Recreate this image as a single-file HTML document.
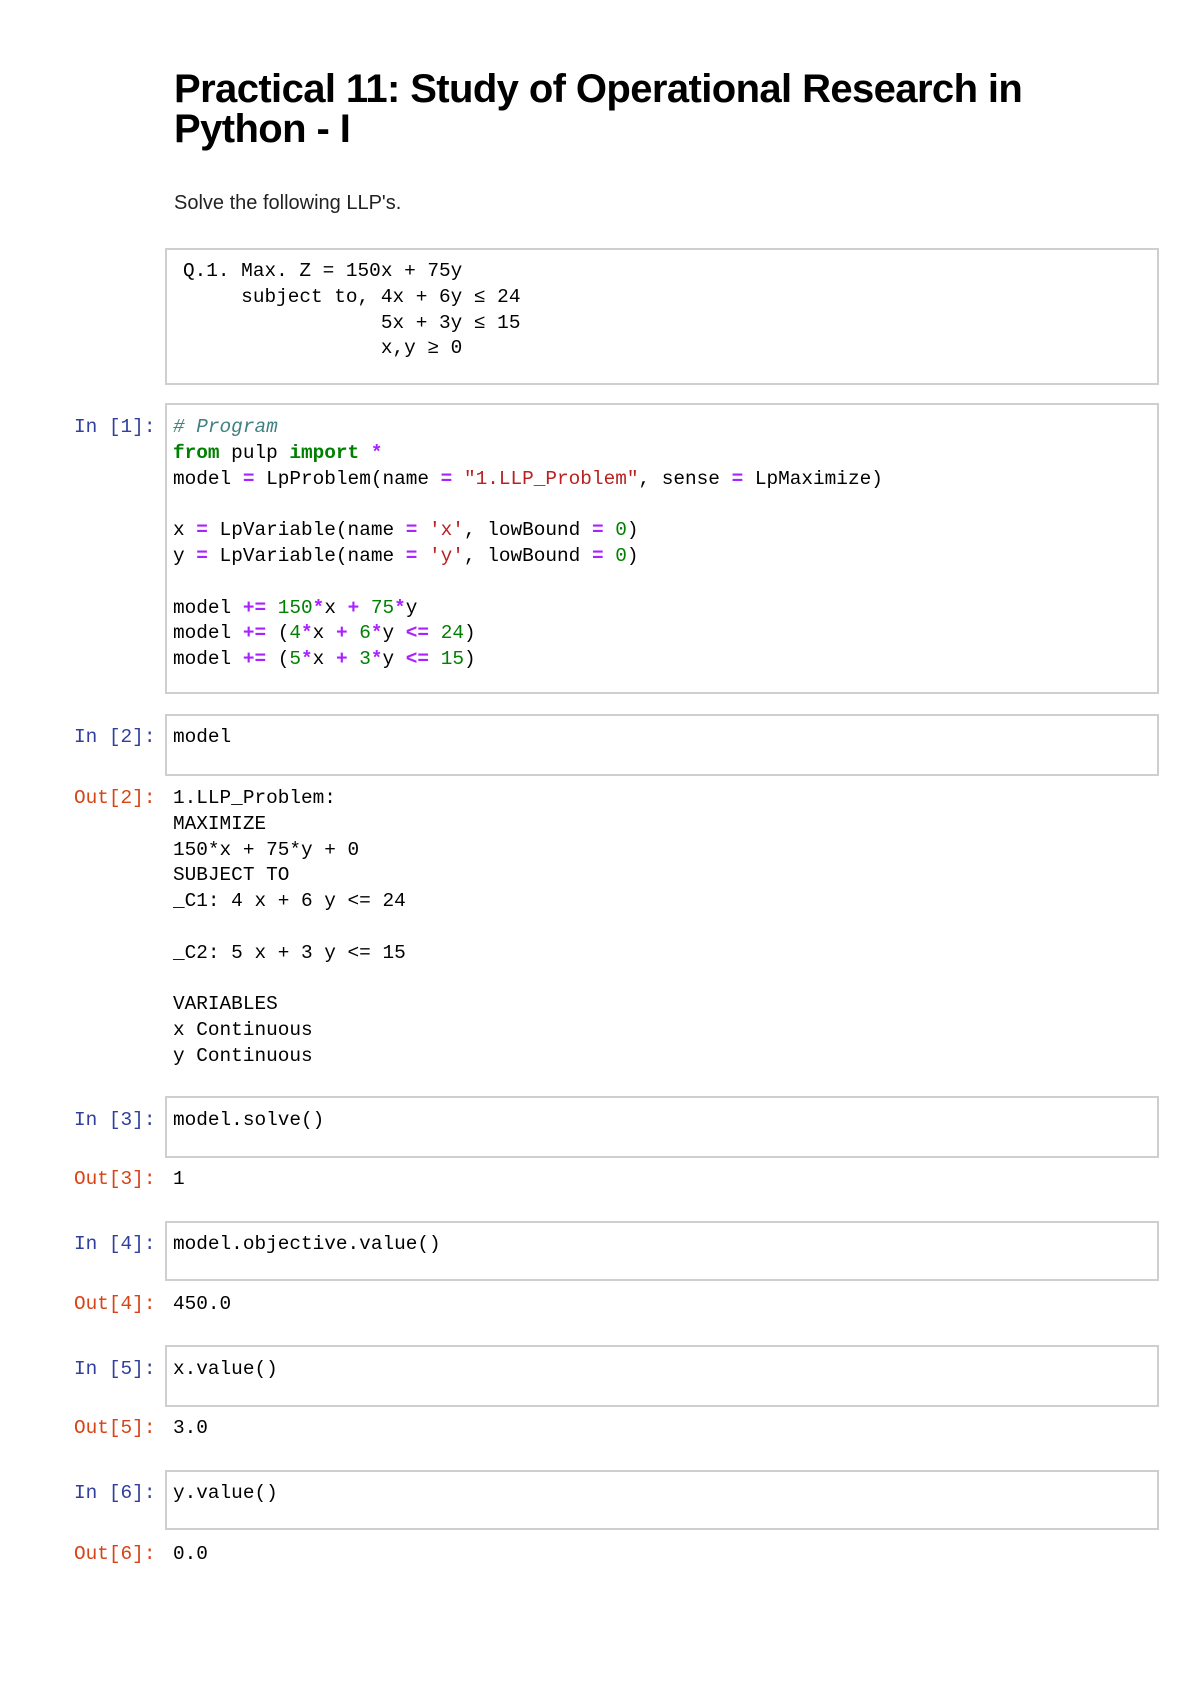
<!DOCTYPE html>
<html><head><meta charset="utf-8"><style>
html,body{margin:0;padding:0;background:#fff;width:1200px;height:1698px;overflow:hidden}
body{position:relative;font-family:"Liberation Mono","DejaVu Sans Mono",monospace}
.a{position:absolute;white-space:pre}
.h{font-family:"Liberation Sans",sans-serif;font-weight:bold;font-size:40px;color:#000;left:174px;letter-spacing:-0.6px}
.box{position:absolute;left:165px;width:994px;border:2px solid #cfcfcf;box-sizing:border-box;background:#fff}
.m{font-size:19.4px;line-height:25.8px;color:#000}
.in{color:#303F9F;font-size:19.4px;line-height:25.8px;left:74px}
.out{color:#D84315;font-size:19.4px;line-height:25.8px;left:74px}
.k{color:#008000;font-weight:bold}
.o{color:#AA22FF;font-weight:bold}
.n{color:#008000}
.s{color:#BA2121}
.c{color:#408080;font-style:italic}
</style></head><body>
<div class="a h" style="top:67px">Practical 11: Study of Operational Research in</div>
<div class="a h" style="top:107px">Python - I</div>
<div class="a" style="top:192px;left:174px;font-family:'Liberation Sans',sans-serif;font-size:20px;color:#222">Solve the following LLP's.</div>

<div class="box" style="top:248px;height:137px"></div>
<div class="a m" style="left:183px;top:259px">Q.1. Max. Z = 150x + 75y
     subject to, 4x + 6y ≤ 24
                 5x + 3y ≤ 15
                 x,y ≥ 0</div>

<div class="box" style="top:403px;height:291px"></div>
<div class="a in" style="top:415px">In [1]:</div>
<div class="a m" style="left:173px;top:415px"><span class="c"># Program</span>
<span class="k">from</span> pulp <span class="k">import</span> <span class="o">*</span>
model <span class="o">=</span> LpProblem(name <span class="o">=</span> <span class="s">"1.LLP_Problem"</span>, sense <span class="o">=</span> LpMaximize)

x <span class="o">=</span> LpVariable(name <span class="o">=</span> <span class="s">'x'</span>, lowBound <span class="o">=</span> <span class="n">0</span>)
y <span class="o">=</span> LpVariable(name <span class="o">=</span> <span class="s">'y'</span>, lowBound <span class="o">=</span> <span class="n">0</span>)

model <span class="o">+=</span> <span class="n">150</span><span class="o">*</span>x <span class="o">+</span> <span class="n">75</span><span class="o">*</span>y
model <span class="o">+=</span> (<span class="n">4</span><span class="o">*</span>x <span class="o">+</span> <span class="n">6</span><span class="o">*</span>y <span class="o">&lt;=</span> <span class="n">24</span>)
model <span class="o">+=</span> (<span class="n">5</span><span class="o">*</span>x <span class="o">+</span> <span class="n">3</span><span class="o">*</span>y <span class="o">&lt;=</span> <span class="n">15</span>)</div>

<div class="box" style="top:714px;height:62px"></div>
<div class="a in" style="top:725px">In [2]:</div>
<div class="a m" style="left:173px;top:725px">model</div>
<div class="a out" style="top:786px">Out[2]:</div>
<div class="a m" style="left:173px;top:786px">1.LLP_Problem:
MAXIMIZE
150*x + 75*y + 0
SUBJECT TO
_C1: 4 x + 6 y &lt;= 24

_C2: 5 x + 3 y &lt;= 15

VARIABLES
x Continuous
y Continuous</div>

<div class="box" style="top:1096px;height:62px"></div>
<div class="a in" style="top:1108px">In [3]:</div>
<div class="a m" style="left:173px;top:1108px">model.solve()</div>
<div class="a out" style="top:1167px">Out[3]:</div>
<div class="a m" style="left:173px;top:1167px">1</div>

<div class="box" style="top:1221px;height:60px"></div>
<div class="a in" style="top:1232px">In [4]:</div>
<div class="a m" style="left:173px;top:1232px">model.objective.value()</div>
<div class="a out" style="top:1292px">Out[4]:</div>
<div class="a m" style="left:173px;top:1292px">450.0</div>

<div class="box" style="top:1345px;height:62px"></div>
<div class="a in" style="top:1357px">In [5]:</div>
<div class="a m" style="left:173px;top:1357px">x.value()</div>
<div class="a out" style="top:1416px">Out[5]:</div>
<div class="a m" style="left:173px;top:1416px">3.0</div>

<div class="box" style="top:1470px;height:60px"></div>
<div class="a in" style="top:1481px">In [6]:</div>
<div class="a m" style="left:173px;top:1481px">y.value()</div>
<div class="a out" style="top:1542px">Out[6]:</div>
<div class="a m" style="left:173px;top:1542px">0.0</div>
</body></html>
